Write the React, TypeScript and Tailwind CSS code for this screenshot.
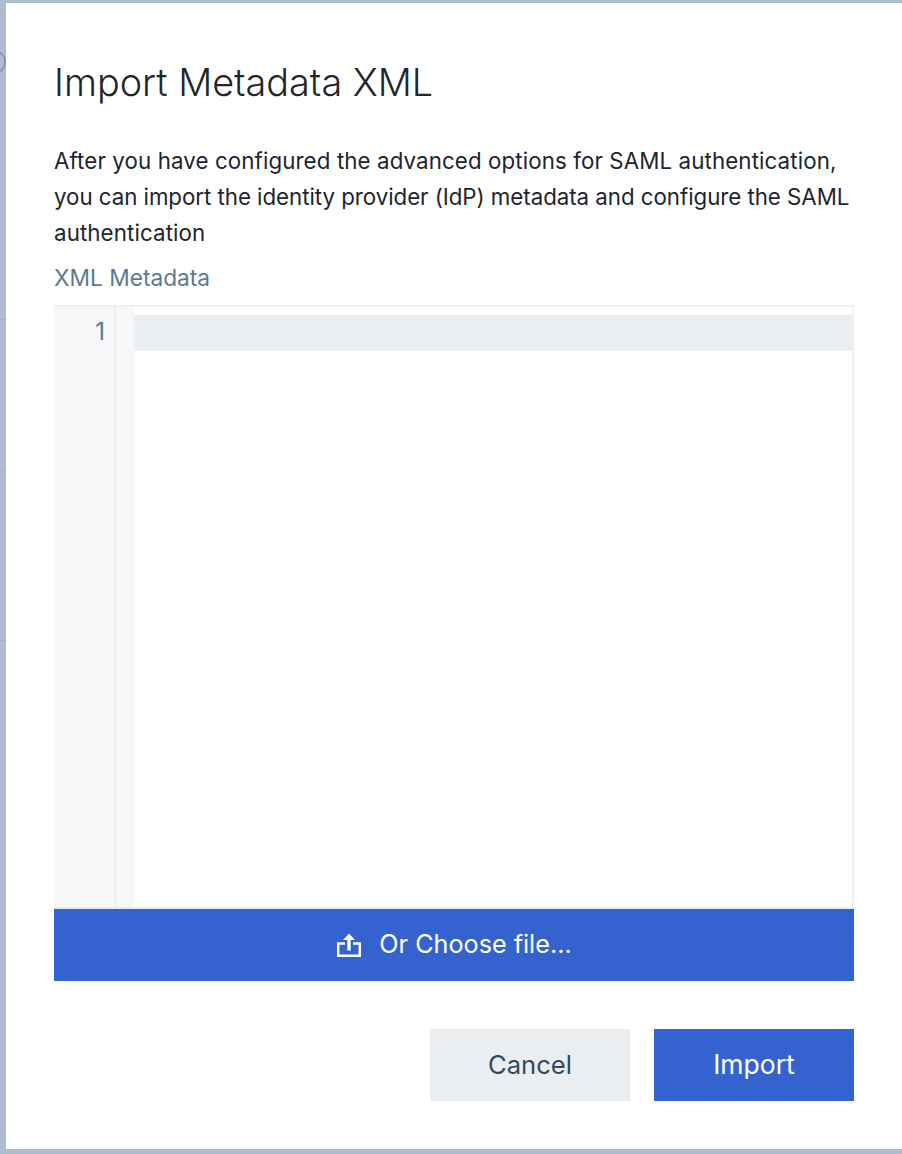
const App = () => {
  return (
    <div className="relative h-[1154px] w-[902px] overflow-hidden bg-[#aebccf] pt-[3px] pb-[5px] pl-[6px] font-['Inter',sans-serif]">
      {/* bits of the page behind the modal */}
      <div className="absolute left-[-14px] top-[51px] h-[22px] w-[20px] rounded-full border-2 border-[#8b97a8]" />
      <div className="absolute left-0 top-[319px] h-px w-[6px] bg-[#a3b1c4]" />
      <div className="absolute left-0 top-[470px] h-px w-[6px] bg-[#a3b1c4]" />
      <div className="absolute left-0 top-[640px] h-px w-[6px] bg-[#a3b1c4]" />

      <div className="flex h-full flex-col bg-white pl-[48px] pr-[48px]">
        <h1 className="mt-[55px] text-[37.8px] leading-[48px] font-light text-[#22262b]">Import Metadata XML</h1>
        <p className="mt-[37px] text-[22.3px] leading-[36px] text-[#1d2530]">
          <span className="tracking-[0.11px]">After you have configured the advanced options for SAML authentication,</span>
          <br />
          <span className="tracking-[-0.04px]">you can import the identity provider (IdP) metadata and configure the SAML</span>
          <br />
          <span className="tracking-[0.11px]">authentication</span>
        </p>
        <label className="mt-[9px] text-[22.7px] leading-[36px] text-[#5c7a94]">XML Metadata</label>

        <div className="mt-[9px] flex h-[604px] border-t-2 border-r-2 border-b-2 border-t-[#edf0f3] border-r-[#edf0f3] border-b-[#e3edf2]">
          <div className="flex w-[62px] justify-end border-r-2 border-[#e9edf0] bg-[#f5f7f9] pt-[7px] pr-[9px] text-[24px] leading-[36px] text-[#5c7a94]">
            1
          </div>
          <div className="w-[18px] bg-[#f5f7f9]" />
          <div className="flex-1 pt-[8px]">
            <div className="h-[36px] bg-[#eaeef1]" />
          </div>
        </div>

        <button className="flex h-[72px] items-center justify-center gap-[17px] bg-[#3463cf] text-[25.2px] text-white">
          <svg width="26" height="26" viewBox="0 0 26 26" fill="none" stroke="currentColor" strokeWidth="2.4">
            <path d="M9 11.500H2.200v12.300h21.600V11.500H17" />
            <path d="M13 18.500V6" strokeWidth="3.400" />
            <path d="M7 8l6-6.500L19 8z" fill="currentColor" strokeWidth="0" />
          </svg>
          Or Choose file...
        </button>

        <div className="mt-[48px] flex justify-end gap-[24px]">
          <button className="h-[72px] w-[200px] bg-[#eaeef1] text-[25.6px] text-[#34495e]">Cancel</button>
          <button className="h-[72px] w-[200px] bg-[#3463cf] text-[26.5px] text-white">Import</button>
        </div>
      </div>
    </div>
  );
};

export default App;
